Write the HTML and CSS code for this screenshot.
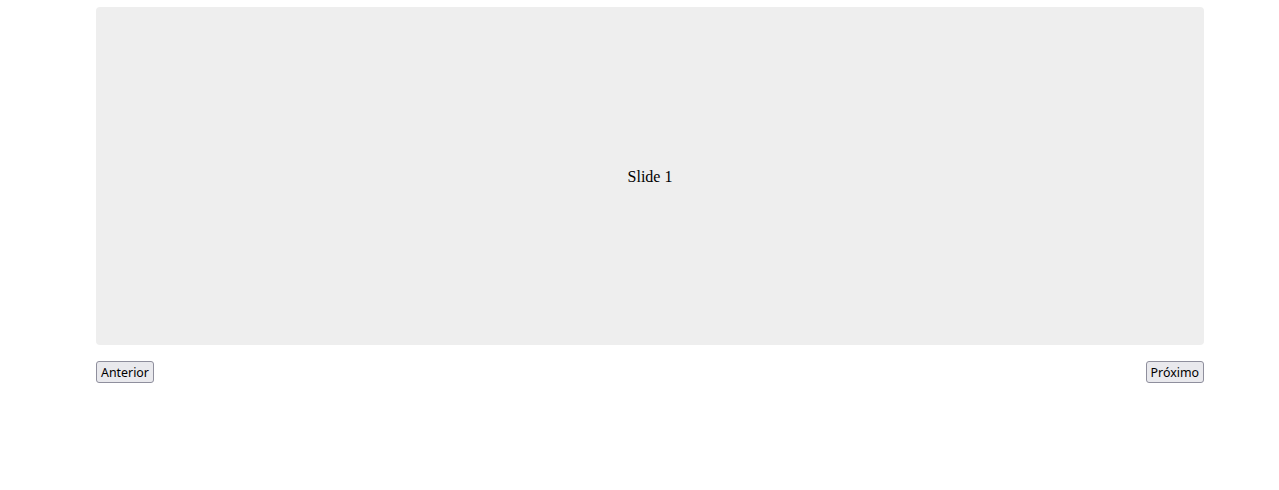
FILE: index.html
```html
<!DOCTYPE html>
<html>
<head>
<meta charset="utf-8">
<link rel="stylesheet" href="styles.css">
</head>
<body>
<div class="carousel">
  <div class="slide">Slide 1</div>
  <div class="controls">
    <button class="btn">Anterior</button>
    <button class="btn">Próximo</button>
  </div>
</div>
</body>
</html>
```
FILE: styles.css
```css
body {
  margin: 0;
  background: #fff;
  font-family: "Liberation Serif", "Times New Roman", serif;
}
.carousel {
  width: 1108px;
  margin: 7px 0 0 96px;
}
.slide {
  height: 338px;
  box-sizing: border-box;
  padding-top: 2px;
  background: #eeeeee;
  border-radius: 4px;
  display: flex;
  align-items: center;
  justify-content: center;
  font-size: 16px;
  color: #000;
}
.controls {
  display: flex;
  justify-content: space-between;
  margin-top: 16px;
}
.btn {
  height: 22px;
  box-sizing: border-box;
  padding: 1px 4px 0;
  margin: 0;
  border: 1px solid #8f8f9d;
  border-radius: 3px;
  background: #e9e9ed;
  color: #000;
  font-family: "Noto Sans", "Open Sans", sans-serif;
  font-size: 12.4px;
  line-height: 19px;
}
```
